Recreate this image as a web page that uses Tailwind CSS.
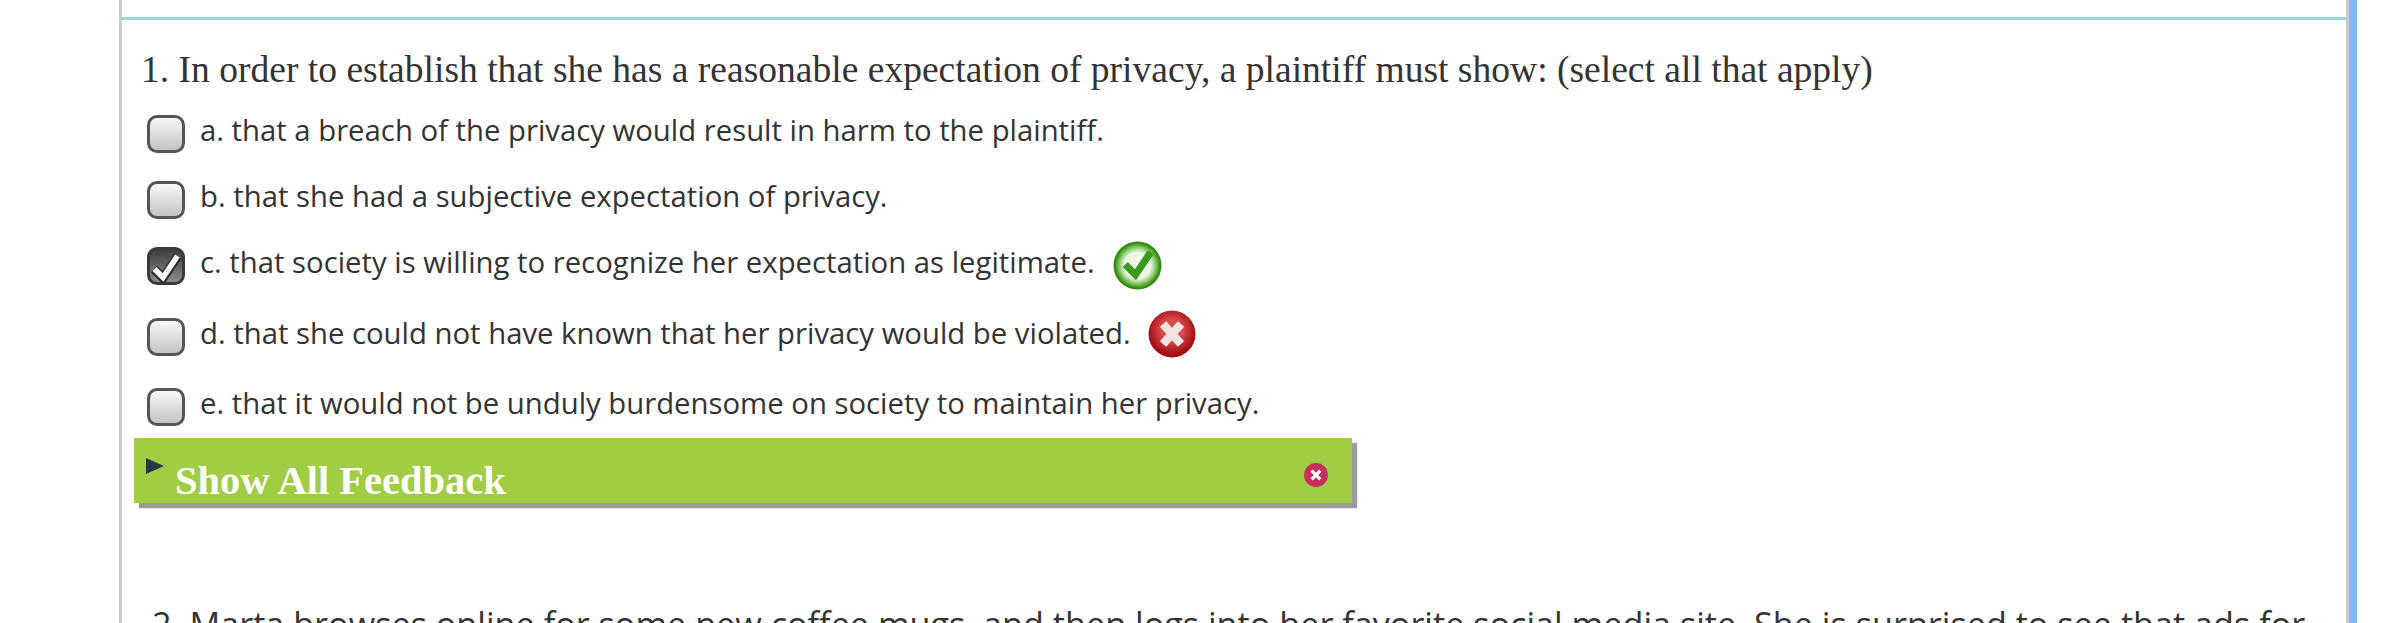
<!DOCTYPE html>
<html><head><meta charset="utf-8"><script src="https://cdn.jsdelivr.net/npm/@tailwindcss/browser@4"></script></head>
<body class="bg-white overflow-hidden">
<div class="w-[2381px] h-[623px] overflow-hidden bg-white flex">
  <div class="ml-[119px] w-[2238px] h-[623px] flex border-l-[3px] border-[#c8ccd0]">
    <div class="flex-1 min-w-0">
      <div class="mt-[17px] h-[3px] bg-[#93d6dc]"></div>
      <p class="ml-[19px] mt-[29px] h-[42px] text-[37.55px] leading-[42px] text-[#333] font-['Liberation_Serif',serif] whitespace-nowrap">1. In order to establish that she has a reasonable expectation of privacy, a plaintiff must show: (select all that apply)</p>
      <div class="ml-[25px] mt-[19px] flex flex-col font-['Open_Sans',sans-serif] text-[29.3px] leading-[40px] text-[#333]">
        <div class="h-[66px] flex items-start"><span class="mt-[5px] w-[38px] h-[38px] rounded-[10px] border-[3px] border-[#555] bg-gradient-to-b from-[#f8f8f8] to-[#c4c4c4]"></span><span class="ml-[15px] whitespace-nowrap">a. that a breach of the privacy would result in harm to the plaintiff.</span></div>
        <div class="h-[66px] flex items-start"><span class="mt-[5px] w-[38px] h-[38px] rounded-[10px] border-[3px] border-[#555] bg-gradient-to-b from-[#f8f8f8] to-[#c4c4c4]"></span><span class="ml-[15px] whitespace-nowrap">b. that she had a subjective expectation of privacy.</span></div>
        <div class="h-[71px] flex items-start"><span class="mt-[5px] w-[38px] h-[38px] rounded-[10px] border-[3px] border-[#3a3a3a] bg-gradient-to-b from-[#3f3f3f] to-[#8c8c8c] flex items-center justify-center">
          <svg viewBox="0 0 32 32" class="w-[32px] h-[32px]"><path d="M4 19l9 9L28 6" fill="none" stroke="#2c2c2c" stroke-width="9"/><path d="M4.500 19l8.500 8.500L27.500 6" fill="none" stroke="#fff" stroke-width="5.500"/></svg></span>
          <span class="ml-[15px] whitespace-nowrap">c. that society is willing to recognize her expectation as legitimate.</span>
          <svg viewBox="0 0 48 48" class="ml-[18px] mt-[-1px] w-[49px] h-[49px]"><defs><radialGradient id="g"><stop offset="55%" stop-color="#eef6e8"/><stop offset="75%" stop-color="#8fca6c"/><stop offset="90%" stop-color="#3f9a1e"/><stop offset="100%" stop-color="#26800c"/></radialGradient></defs><circle cx="24" cy="24" r="23.500" fill="url(#g)"/><path d="M12 23l10 10L37 11" fill="none" stroke="#3c9a1a" stroke-width="7"/></svg>
        </div>
        <div class="h-[70px] flex items-start"><span class="mt-[5px] w-[38px] h-[38px] rounded-[10px] border-[3px] border-[#555] bg-gradient-to-b from-[#f8f8f8] to-[#c4c4c4]"></span><span class="ml-[15px] whitespace-nowrap">d. that she could not have known that her privacy would be violated.</span>
          <svg viewBox="0 0 48 48" class="ml-[17px] mt-[-3px] w-[48px] h-[48px]"><defs><radialGradient id="r" cy="42%"><stop offset="45%" stop-color="#dc4a4c"/><stop offset="100%" stop-color="#a30f16"/></radialGradient></defs><circle cx="24" cy="24" r="23.500" fill="url(#r)"/><path d="M15 14l18 20M33 14L15 34" stroke="#f0e4e2" stroke-width="8.500"/></svg>
        </div>
        <div class="h-[45px] flex items-start"><span class="mt-[5px] w-[38px] h-[38px] rounded-[10px] border-[3px] border-[#555] bg-gradient-to-b from-[#f8f8f8] to-[#c4c4c4]"></span><span class="ml-[15px] whitespace-nowrap">e. that it would not be unduly burdensome on society to maintain her privacy.</span></div>
      </div>
      <div class="ml-[12px] mt-[10px] w-[1218px] h-[65px] bg-[#a1cd44] shadow-[5px_5px_1px_#9a9c9e] flex items-start">
        <svg viewBox="0 0 18 16" class="ml-[12px] mt-[19px] w-[18px] h-[18px] shrink-0"><path d="M0 0l18 8-18 8z" fill="#2a3640"/></svg>
        <span class="ml-[11px] mt-[23px] flex-1 text-[40.5px] leading-[40px] font-bold text-white font-['Liberation_Serif',serif] whitespace-nowrap">Show All Feedback</span>
        <svg viewBox="0 0 24 24" class="mt-[24px] mr-[23px] w-[26px] h-[26px] shrink-0"><circle cx="12" cy="12" r="11" fill="#c62f5c"/><path d="M8 8l8 8M16 8l-8 8" stroke="#fff" stroke-width="3"/></svg>
      </div>
      <p class="ml-[30px] mt-[101px] font-['Open_Sans',sans-serif] text-[34.2px] leading-[40px] text-[#333] whitespace-nowrap">2. Marta browses online for some new coffee mugs, and then logs into her favorite social media site. She is surprised to see that ads for</p>
    </div>
    <div class="w-[3px] bg-[#c8ccd0]"></div>
    <div class="w-[8px] bg-[#85b8ff]"></div>
  </div>
</div>
</body></html>
